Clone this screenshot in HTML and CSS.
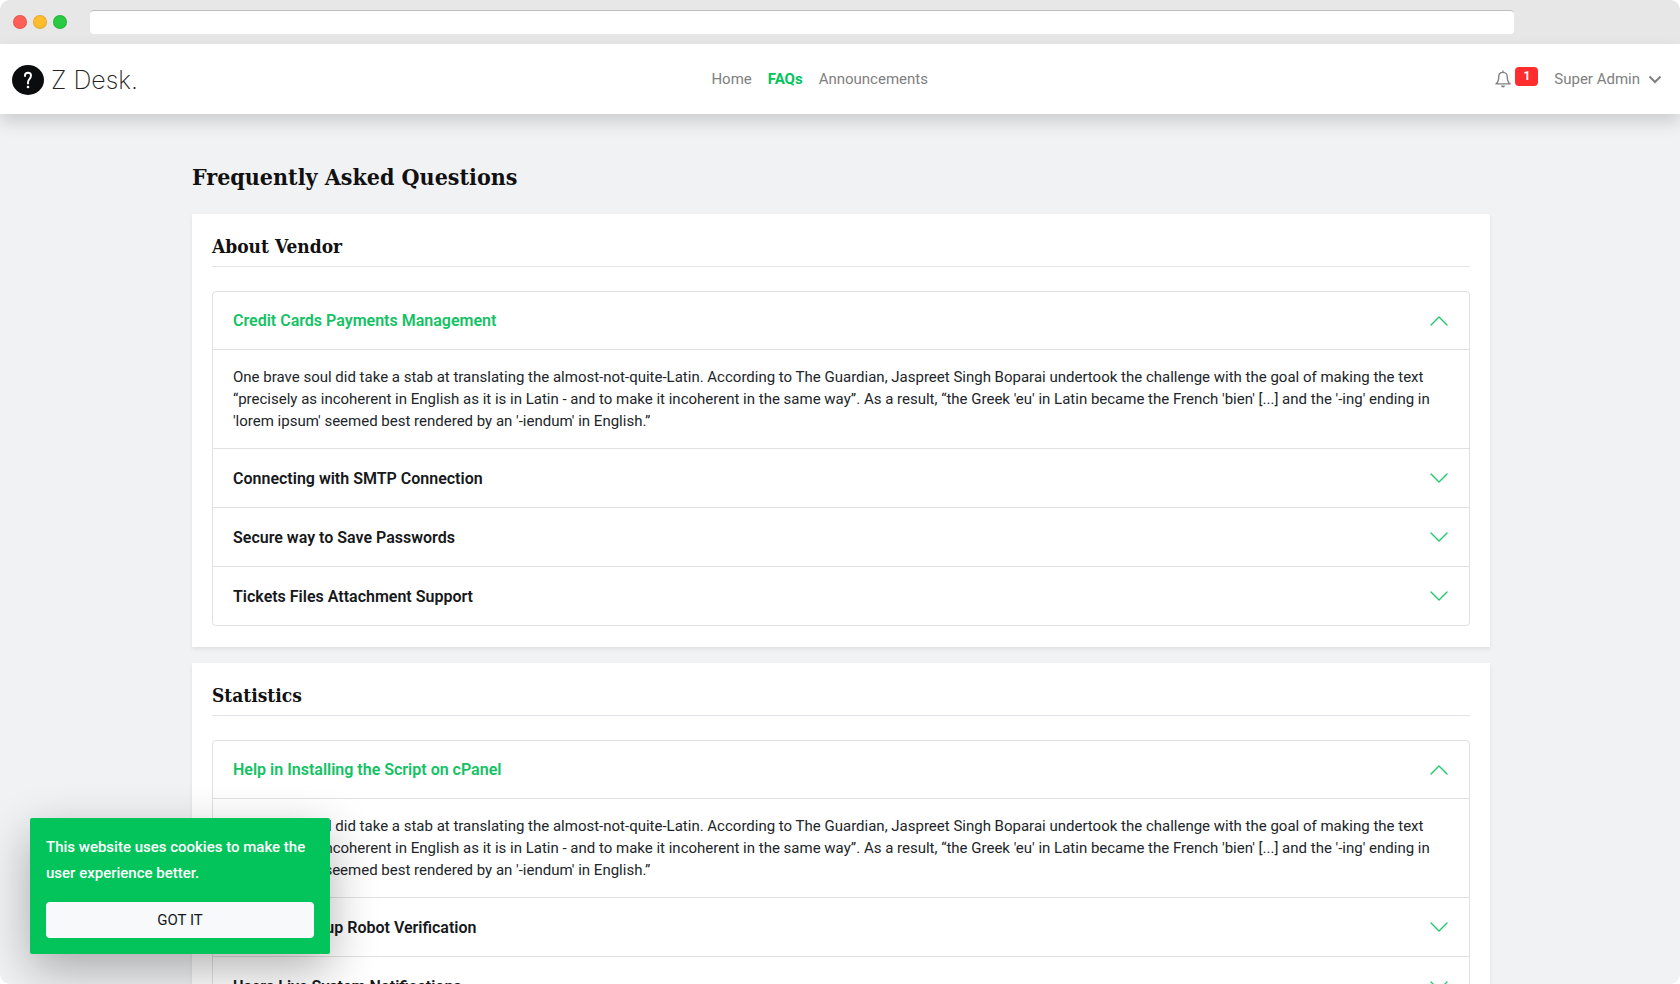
FILE: index.html
```
<!DOCTYPE html>
<html lang="en">
<head>
  <meta charset="utf-8">
  <meta name="viewport" content="width=device-width, initial-scale=1">
  <title>Z Desk - Frequently Asked Questions</title>
  <link rel="stylesheet" href="styles.css">
</head>
<body>

<svg width="0" height="0" class="sprite" aria-hidden="true">
  <symbol id="chevron" viewBox="0 0 18 10">
    <path d="M1 1l8 8 8-8" fill="none" stroke="currentColor" stroke-width="1.4" stroke-linecap="round" stroke-linejoin="round"/>
  </symbol>
</svg>

<div class="window">
  <div class="window-bar">
    <span class="dot dot-red"></span>
    <span class="dot dot-yellow"></span>
    <span class="dot dot-green"></span>
    <input class="address" type="text" aria-label="Address">
  </div>

  <header class="navbar">
    <a class="brand" href="#">
      <svg class="brand-icon" viewBox="0 0 32 30" aria-hidden="true">
        <ellipse cx="16" cy="15" rx="16" ry="15" fill="#0b0c0e"/>
        <path d="M13 11.800v-1.200c0-1.800 1.100-2.800 3-2.800s3 1 3 2.800c0 3.200-3 3.900-3 6.600v2" fill="none" stroke="#fff" stroke-width="1.900"/>
        <circle cx="16" cy="22" r="1.300" fill="#fff"/>
      </svg>
      <span class="brand-name">Z Desk.</span>
    </a>
    <nav class="menu">
      <a href="#">Home</a>
      <a href="#" class="active">FAQs</a>
      <a href="#">Announcements</a>
    </nav>
    <div class="account">
      <button class="bell" type="button" aria-label="Notifications">
        <svg width="16" height="18" viewBox="0 0 16 18" fill="none" stroke="currentColor" stroke-width="1.400" stroke-linejoin="round" aria-hidden="true">
          <path d="M8 .5v1.900M8 2.400c-2.700 0-4.300 2-4.300 4.600 0 3.400-.8 5.500-2.700 6.900h14c-1.900-1.400-2.700-3.500-2.700-6.900 0-2.600-1.600-4.600-4.300-4.600z"/>
          <path d="M6 15.500a2 2 0 0 0 4 0z" fill="currentColor" stroke="none"/>
        </svg>
        <span class="badge">1</span>
      </button>
      <button class="user" type="button">
        Super Admin
        <svg width="14" height="9" viewBox="0 0 14 9" aria-hidden="true">
          <path d="M1.500 1.500l5.500 5.500 5.500-5.500" fill="none" stroke="currentColor" stroke-width="2"/>
        </svg>
      </button>
    </div>
  </header>

  <main class="content">
    <div class="container">
      <h1>Frequently Asked Questions</h1>

      <section class="card">
        <h2>About Vendor</h2>
        <div class="accordion">
          <div class="item open">
            <h3><button type="button" aria-expanded="true">Credit Cards Payments Management<svg class="chevron"><use href="#chevron"/></svg></button></h3>
            <p>One brave soul did take a stab at translating the almost-not-quite-Latin. According to The Guardian, Jaspreet Singh Boparai undertook the challenge with the goal of making the text “precisely as incoherent in English as it is in Latin - and to make it incoherent in the same way”. As a result, “the Greek 'eu' in Latin became the French 'bien' [...] and the '-ing' ending in 'lorem ipsum' seemed best rendered by an '-iendum' in English.”</p>
          </div>
          <div class="item">
            <h3><button type="button" aria-expanded="false">Connecting with SMTP Connection<svg class="chevron"><use href="#chevron"/></svg></button></h3>
          </div>
          <div class="item">
            <h3><button type="button" aria-expanded="false">Secure way to Save Passwords<svg class="chevron"><use href="#chevron"/></svg></button></h3>
          </div>
          <div class="item">
            <h3><button type="button" aria-expanded="false">Tickets Files Attachment Support<svg class="chevron"><use href="#chevron"/></svg></button></h3>
          </div>
        </div>
      </section>

      <section class="card">
        <h2>Statistics</h2>
        <div class="accordion">
          <div class="item open">
            <h3><button type="button" aria-expanded="true">Help in Installing the Script on cPanel<svg class="chevron"><use href="#chevron"/></svg></button></h3>
            <p>One brave soul did take a stab at translating the almost-not-quite-Latin. According to The Guardian, Jaspreet Singh Boparai undertook the challenge with the goal of making the text “precisely as incoherent in English as it is in Latin - and to make it incoherent in the same way”. As a result, “the Greek 'eu' in Latin became the French 'bien' [...] and the '-ing' ending in 'lorem ipsum' seemed best rendered by an '-iendum' in English.”</p>
          </div>
          <div class="item">
            <h3><button type="button" aria-expanded="false">Help Setting up Robot Verification<svg class="chevron"><use href="#chevron"/></svg></button></h3>
          </div>
          <div class="item">
            <h3><button type="button" aria-expanded="false">Users Live System Notifications<svg class="chevron"><use href="#chevron"/></svg></button></h3>
          </div>
        </div>
      </section>
    </div>
  </main>

  <div class="cookies" id="cookies">
    <p>This website uses cookies to make the user experience better.</p>
    <button type="button" id="gotIt">GOT IT</button>
  </div>
</div>

<script>
  document.querySelectorAll(".item button").forEach((button) => {
    button.addEventListener("click", () => {
      const open = button.closest(".item").classList.toggle("open");
      button.setAttribute("aria-expanded", open);
    });
  });

  document.getElementById("gotIt").addEventListener("click", () => {
    document.getElementById("cookies").remove();
  });
</script>

</body>
</html>
```
FILE: styles.css
```
* {
  box-sizing: border-box;
}

body {
  margin: 0;
  font-family: Roboto, "Open Sans", sans-serif;
  font-size: 15px;
  color: #212529;
  background: #fff;
}

button {
  font-family: inherit;
  cursor: pointer;
}

.sprite {
  position: absolute;
}

.window {
  position: relative;
  display: flex;
  flex-direction: column;
  height: 100vh;
  overflow: hidden;
  border-radius: 10px;
  background: #f1f2f4;
}

/* browser bar */
.window-bar {
  display: flex;
  align-items: center;
  gap: 6px;
  height: 44px;
  flex-shrink: 0;
  padding: 0 166px 0 13px;
  background: #e7e7e7;
}

.dot {
  width: 14px;
  height: 14px;
  border-radius: 50%;
  border: 1px solid rgba(0, 0, 0, 0.1);
}

.dot-red {
  background: #ff5f57;
}

.dot-yellow {
  background: #ffbd2e;
}

.dot-green {
  background: #28ca41;
}

.address {
  flex: 1;
  height: 24px;
  margin-left: 17px;
  padding: 0 8px;
  border: 0;
  border-top: 1px solid #bdbdbd;
  border-radius: 4px;
  background: #fff;
}

/* header */
.navbar {
  position: relative;
  z-index: 1;
  display: flex;
  align-items: center;
  justify-content: space-between;
  height: 70px;
  flex-shrink: 0;
  padding: 0 18px 0 12px;
  background: #fff;
  box-shadow: 0 8px 16px rgba(0, 0, 0, 0.15);
}

.brand {
  display: flex;
  align-items: center;
  gap: 7px;
  padding: 2px 6px 0 0;
  color: #222;
  text-decoration: none;
}

.brand-icon {
  width: 32px;
  height: 30px;
}

.brand-name {
  font-family: Inter, Lato, sans-serif;
  font-size: 25px;
  font-weight: 200;
}

.menu {
  display: flex;
  gap: 16px;
}

.menu a {
  color: #808080;
  text-decoration: none;
}

.menu .active {
  color: #02c45b;
  font-weight: 700;
}

.account {
  display: flex;
  align-items: center;
  gap: 16px;
}

.account button {
  display: flex;
  align-items: center;
  padding: 0;
  border: 0;
  background: none;
  color: #808080;
  font-size: 15px;
}

.account .bell {
  gap: 4px;
  align-items: flex-start;
}

.bell svg {
  margin-top: 3px;
}

.badge {
  margin-bottom: 6px;
  padding: 3px 8px 4px;
  border-radius: 4px;
  background: #ff2d2e;
  color: #fff;
  font-size: 12px;
  line-height: 12px;
  font-weight: 700;
}

.user {
  gap: 8px;
}

/* faq cards */
.content {
  flex: 1;
  overflow-y: auto;
  scrollbar-width: none;
}

.container {
  max-width: 1332px;
  margin: 0 auto;
  padding: 47px 16px 16px 18px;
}

h1,
h2 {
  font-family: "DejaVu Serif Condensed", "DejaVu Serif", serif;
  font-weight: 600;
  color: #111;
}

h1 {
  margin: 0 0 21px;
  font-size: 23px;
  line-height: 32px;
}

h2 {
  margin: 0 0 24px;
  padding-bottom: 7px;
  border-bottom: 1px solid #e2e4e9;
  font-size: 19px;
  line-height: 25px;
}

.card {
  margin-bottom: 16px;
  padding: 20px 20px 21px;
  background: #fff;
  box-shadow: 0 2px 4px rgba(0, 0, 0, 0.08);
}

.accordion {
  border: 1px solid #e1e1e1;
  border-radius: 4px;
}

.item + .item {
  border-top: 1px solid #e1e1e1;
}

h3 {
  margin: 0;
}

.item button {
  display: flex;
  align-items: center;
  justify-content: space-between;
  width: 100%;
  height: 58px;
  padding: 0 21px 0 20px;
  border: 0;
  background: none;
  color: #16181b;
  font-size: 16px;
  font-weight: 600;
}

.item p {
  display: none;
  margin: 0;
  padding: 16px 20px;
  border-top: 1px solid #e1e1e1;
  line-height: 22px;
}

.item.open p {
  display: block;
}

.item.open button {
  height: 57px;
  color: #12c264;
}

.chevron {
  width: 18px;
  height: 10px;
  color: #1fc96c;
}

.item.open .chevron {
  transform: rotate(180deg);
}

/* cookie notice */
.cookies {
  position: absolute;
  left: 30px;
  bottom: 30px;
  z-index: 2;
  width: 300px;
  padding: 16px;
  border-radius: 2px;
  background: #02c45b;
  box-shadow: 0 16px 48px rgba(0, 0, 0, 0.3);
}

.cookies p {
  margin: 0 0 16px;
  color: #fff;
  font-weight: 500;
  line-height: 26px;
}

.cookies button {
  width: 100%;
  height: 36px;
  border: 0;
  border-radius: 4px;
  background: #f8f9fb;
  color: #16181b;
  font-size: 15px;
}
```
